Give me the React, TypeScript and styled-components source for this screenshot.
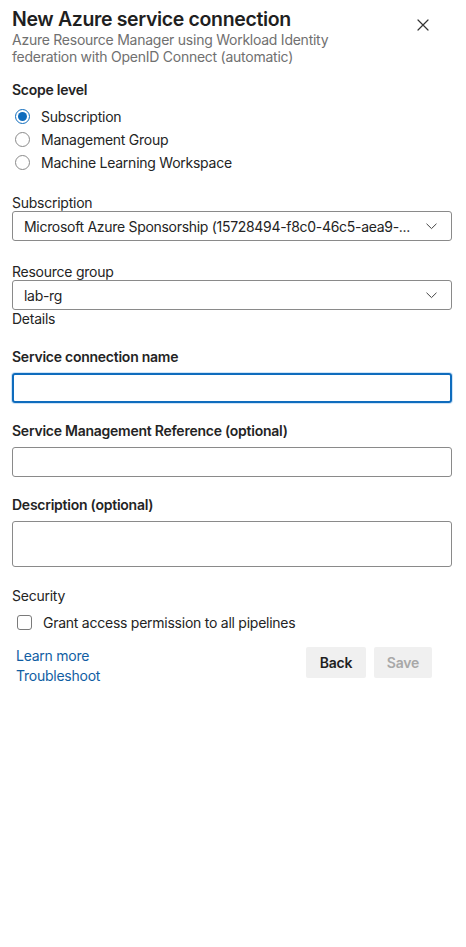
import styled, { createGlobalStyle } from "styled-components"

const GlobalStyle = createGlobalStyle`
  body {
    margin: 0;
    background: #fff;
    font-family: Inter, "Liberation Sans", Arial, sans-serif;
    color: #242424;
    letter-spacing: -0.25px;
  }
`

const Panel = styled.div`
  width: 466px;
  min-height: 947px;
  box-sizing: border-box;
  padding: 7px 14px 0 12px;
`

const Header = styled.div`
  display: flex;
  justify-content: space-between;
  align-items: flex-start;
`

const Title = styled.h1`
  margin: 0;
  font-size: 19.5px;
  line-height: 24px;
  font-weight: 600;
  letter-spacing: -0.35px;
  color: #1f1f1f;
`

const Subtitle = styled.div`
  font-size: 14px;
  line-height: 17px;
  color: #707070;
  width: 330px;
`

const CloseButton = styled.button`
  border: none;
  background: none;
  padding: 0;
  margin: 12px 21px 0 0;
  width: 14px;
  height: 14px;
  display: flex;
  cursor: pointer;
`

const SectionLabel = styled.div<{ $top: number; $bold?: boolean }>`
  margin-top: ${(p) => p.$top}px;
  font-size: 14px;
  line-height: ${(p) => (p.$bold ? 20 : 17)}px;
  font-weight: ${(p) => (p.$bold ? 600 : 400)};
  color: #242424;
`

const RadioList = styled.div`
  margin-top: 5px;
  display: flex;
  flex-direction: column;
`

const RadioRow = styled.label`
  display: flex;
  align-items: center;
  height: 23px;
  gap: 11px;
  padding-left: 3px;
  font-size: 14px;
  color: #242424;
`

const RadioCircle = styled.span<{ $checked?: boolean }>`
  width: 15px;
  height: 15px;
  box-sizing: border-box;
  border-radius: 50%;
  border: 1px solid ${(p) => (p.$checked ? "#0f6cbd" : "#8a8a8a")};
  display: flex;
  align-items: center;
  justify-content: center;

  &::after {
    content: "";
    display: ${(p) => (p.$checked ? "block" : "none")};
    width: 9px;
    height: 9px;
    border-radius: 50%;
    background: #0f6cbd;
  }
`

const SelectBox = styled.div`
  height: 30px;
  box-sizing: border-box;
  border: 1px solid #8a8a8a;
  border-radius: 3px;
  display: flex;
  align-items: center;
  justify-content: space-between;
  gap: 12px;
  padding: 0 14px 0 11px;
  font-size: 14px;
  color: #242424;
`

const SelectText = styled.span`
  white-space: nowrap;
  overflow: hidden;
  letter-spacing: -0.3px;
`

const TextInput = styled.div<{ $focused?: boolean; $height?: number }>`
  height: ${(p) => p.$height ?? 30}px;
  box-sizing: border-box;
  border: ${(p) => (p.$focused ? "2px solid #0f6cbd" : "1px solid #8a8a8a")};
  border-radius: 3px;
  box-shadow: ${(p) => (p.$focused ? "0 0 0 1px #cfe4f7" : "none")};
`

const FieldLabel = styled.div<{ $top: number }>`
  margin-top: ${(p) => p.$top}px;
  margin-bottom: 7px;
  font-size: 14px;
  line-height: 18px;
  font-weight: 600;
  color: #242424;
`

const CheckRow = styled.label`
  margin-top: 8px;
  display: flex;
  align-items: center;
  gap: 11px;
  padding-left: 5px;
  height: 20px;
  font-size: 14px;
  color: #242424;
`

const CheckBox = styled.span`
  width: 15px;
  height: 15px;
  box-sizing: border-box;
  border: 1px solid #7a7a7a;
  border-radius: 3px;
`

const Footer = styled.div`
  margin-top: 14px;
  display: flex;
  justify-content: space-between;
  align-items: flex-start;
  padding-right: 20px;
  padding-left: 4px;
`

const Links = styled.div`
  display: flex;
  flex-direction: column;
`

const LinkText = styled.a`
  font-size: 14px;
  line-height: 20px;
  color: #115ea3;
  text-decoration: none;
`

const Buttons = styled.div`
  display: flex;
  gap: 8px;
  margin-top: 1px;
`

const Button = styled.button<{ $disabled?: boolean; $width: number }>`
  width: ${(p) => p.$width}px;
  height: 31px;
  border: none;
  border-radius: 2px;
  background: #f0f0f0;
  font-family: inherit;
  font-size: 14px;
  font-weight: 600;
  letter-spacing: -0.2px;
  color: ${(p) => (p.$disabled ? "#a8a8a8" : "#1f1f1f")};
  cursor: ${(p) => (p.$disabled ? "default" : "pointer")};
`

const Chevron = () => (
  <svg width="11" height="7" viewBox="0 0 11 7" fill="none" style={{ flexShrink: 0 }}>
    <path d="M0.8 1 L5.5 5.6 L10.2 1" stroke="#444" strokeWidth="1" strokeLinecap="round" strokeLinejoin="round" />
  </svg>
)

export default function App() {
  return (
    <Panel>
      <GlobalStyle />
      <Header>
        <div>
          <Title>New Azure service connection</Title>
          <Subtitle>Azure Resource Manager using Workload Identity federation with OpenID Connect (automatic)</Subtitle>
        </div>
        <CloseButton aria-label="Close">
          <svg width="12" height="12" viewBox="0 0 12 12">
            <path d="M1 1 L11 11 M11 1 L1 11" stroke="#333" strokeWidth="1.2" strokeLinecap="round" />
          </svg>
        </CloseButton>
      </Header>

      <SectionLabel $top={15} $bold>Scope level</SectionLabel>
      <RadioList>
        <RadioRow>
          <RadioCircle $checked />
          Subscription
        </RadioRow>
        <RadioRow>
          <RadioCircle />
          Management Group
        </RadioRow>
        <RadioRow>
          <RadioCircle />
          Machine Learning Workspace
        </RadioRow>
      </RadioList>

      <SectionLabel $top={20}>Subscription</SectionLabel>
      <SelectBox>
        <SelectText>Microsoft Azure Sponsorship (15728494-f8c0-46c5-aea9-...</SelectText>
        <Chevron />
      </SelectBox>

      <SectionLabel $top={22}>Resource group</SectionLabel>
      <SelectBox>
        <SelectText>lab-rg</SelectText>
        <Chevron />
      </SelectBox>
      <SectionLabel $top={0}>Details</SectionLabel>

      <FieldLabel $top={21}>Service connection name</FieldLabel>
      <TextInput $focused />

      <FieldLabel $top={19}>Service Management Reference (optional)</FieldLabel>
      <TextInput />

      <FieldLabel $top={19}>Description (optional)</FieldLabel>
      <TextInput $height={46} />

      <SectionLabel $top={20}>Security</SectionLabel>
      <CheckRow>
        <CheckBox />
        Grant access permission to all pipelines
      </CheckRow>

      <Footer>
        <Links>
          <LinkText href="#">Learn more</LinkText>
          <LinkText href="#">Troubleshoot</LinkText>
        </Links>
        <Buttons>
          <Button $width={60}>Back</Button>
          <Button $width={58} $disabled>Save</Button>
        </Buttons>
      </Footer>
    </Panel>
  )
}
